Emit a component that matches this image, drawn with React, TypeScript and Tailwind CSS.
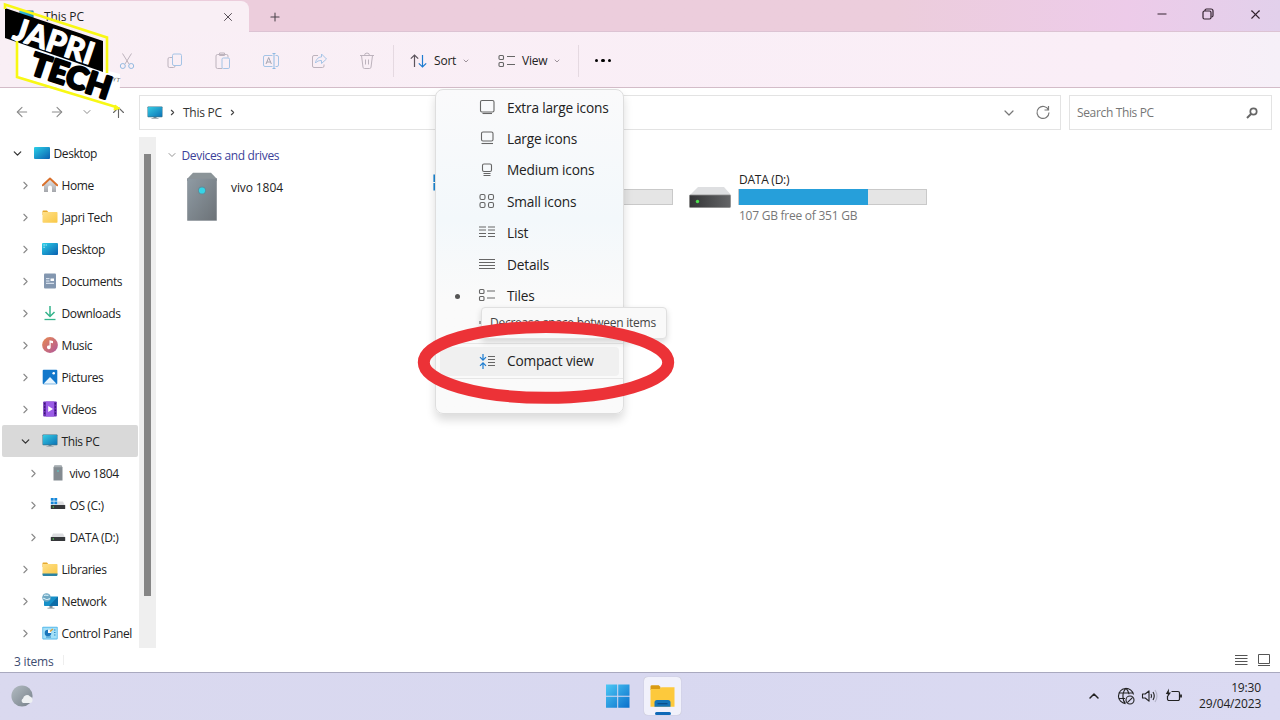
import React from 'react';
import { ChevronDown, ChevronRight, ChevronUp, X, Plus, Minus, ArrowLeft, ArrowRight, ArrowUp } from 'lucide-react';

const Monitor = ({ className = 'h-4 w-4' }: { className?: string }) => (
  <svg viewBox="0 0 16 16" className={className}>
    <defs>
      <linearGradient id="screen" x1="0" y1="0" x2="1" y2="1">
        <stop offset="0" stopColor="#35cbe3" />
        <stop offset="1" stopColor="#0d73b6" />
      </linearGradient>
    </defs>
    <rect x="6.5" y="11" width="3" height="3" fill="#7d8a94" />
    <rect x="4.5" y="13" width="7" height="1" fill="#a9b2b8" />
    <rect x="0.5" y="1.5" width="15" height="10.7" rx="0.7" fill="#37748d" />
    <rect x="1" y="2" width="14" height="9.6" rx="0.4" fill="url(#screen)" />
  </svg>
);

const DesktopIcon = ({ dots = false }: { dots?: boolean }) => (
  <svg viewBox="0 0 16 16" className="h-4 w-4">
    <defs>
      <linearGradient id="desk" x1="0" y1="0" x2="1" y2="1">
        <stop offset="0" stopColor="#2bd0e8" />
        <stop offset="1" stopColor="#0a5fb0" />
      </linearGradient>
    </defs>
    <rect x="0" y="2" width="16" height="12" rx="1" fill="url(#desk)" />
    {dots && <path d="M1.5 4h1.2M3.7 4h1M1.5 6.2h1.2" stroke="#d8f8ff" strokeWidth="1.1" />}
  </svg>
);

const HomeIcon = () => (
  <svg viewBox="0 0 16 16" className="h-4 w-4">
    <defs>
      <linearGradient id="house" x1="0" y1="0" x2="0" y2="1">
        <stop offset="0" stopColor="#e6e6e8" />
        <stop offset="1" stopColor="#a4a6ab" />
      </linearGradient>
    </defs>
    <path d="M2 7.5 8 2l6 5.500V15h-4V10.500a2 2 0 0 0-4 0V15H2z" fill="url(#house)" />
    <path d="M.8 8.300 8 1.500l7.200 6.800" fill="none" stroke="#d9702b" strokeWidth="1.900" strokeLinecap="round" strokeLinejoin="round" />
  </svg>
);

const FolderIcon = ({ base = false }: { base?: boolean }) => (
  <svg viewBox="0 0 16 16" className="h-4 w-4">
    <defs>
      <linearGradient id="folder" x1="0" y1="0" x2="1" y2="1">
        <stop offset="0" stopColor="#ffe08a" />
        <stop offset="1" stopColor="#f9c846" />
      </linearGradient>
    </defs>
    <path d="M.5 2.400a.8.8 0 0 1 .8-.8H5l1.200 1.300V6H.5z" fill="#e6a92c" />
    <rect x=".5" y="3" width="15" height="10.800" rx=".7" fill="url(#folder)" />
    {base && <path d="M.5 12.500h15v1.600a.8.8 0 0 1-.8.8H1.300a.8.8 0 0 1-.8-.8z" fill="#2b83a4" />}
  </svg>
);

const DocumentIcon = () => (
  <svg viewBox="0 0 16 16" className="h-4 w-4">
    <rect x="2" y=".5" width="12" height="15" rx="1" fill="#8397b0" />
    <path d="M8.500 5.500h3.500v2.500H8.500z" fill="#fff" />
    <path d="M4 5.700h3.500M4 8h3.500M4 10.300h8" stroke="#e8f1fa" strokeWidth="1" />
  </svg>
);

const DownloadIcon = () => (
  <svg viewBox="0 0 16 16" className="h-4 w-4">
    <path d="M8 1v10M3.500 7 8 11.500 12.500 7" fill="none" stroke="#35b48c" strokeWidth="1.500" />
    <path d="M2.500 14.500h11" stroke="#35b48c" strokeWidth="1.300" />
  </svg>
);

const MusicIcon = () => (
  <svg viewBox="0 0 16 16" className="h-4 w-4">
    <defs>
      <linearGradient id="music" x1="0" y1="0" x2="1" y2="1">
        <stop offset="0" stopColor="#e8894f" />
        <stop offset="1" stopColor="#b0589d" />
      </linearGradient>
    </defs>
    <circle cx="8" cy="8" r="7.900" fill="url(#music)" />
    <path d="M7.500 3.200 11 4v2.200l-2.300-.5v4.800a1.900 1.900 0 1 1-1.200-1.900z" fill="#fff" />
  </svg>
);

const PictureIcon = () => (
  <svg viewBox="0 0 16 16" className="h-4 w-4">
    <rect x=".7" y=".7" width="14.600" height="14.600" rx="1" fill="#1278cb" />
    <path d="M1.500 14.800 8 8l6.500 6.800z" fill="#e9f6ff" />
    <circle cx="11.700" cy="4.200" r="1.300" fill="#fff" />
  </svg>
);

const VideoIcon = () => (
  <svg viewBox="0 0 16 16" className="h-4 w-4">
    <rect x="1.200" y=".5" width="13.600" height="15" rx=".8" fill="#6b2fb5" />
    <rect x="4" y=".5" width="8" height="15" fill="#9b5ce6" />
    <path d="M2.600 2v12M13.400 2v12" stroke="#3a1470" strokeWidth="1.300" strokeDasharray="1.500 1.700" />
    <path d="M6.200 5v6L11 8z" fill="#fff" />
  </svg>
);

const TowerIcon = () => (
  <svg viewBox="0 0 16 16" className="h-4 w-4">
    <path d="M4.500.5h7l1 2v13h-9v-13z" fill="#838b91" />
    <path d="M4.500.5h7l.8 1.800H3.700z" fill="#a6adb1" />
    <circle cx="8" cy="6" r="1" fill="#62b8bd" />
  </svg>
);

const DriveIcon = ({ windows = false }: { windows?: boolean }) => (
  <svg viewBox="0 0 16 16" className="h-4 w-4">
    <path d="M3 4.500h10l2 4H1z" fill="#dcdde0" />
    <rect x=".8" y="8" width="14.400" height="4" rx=".5" fill="#35373a" />
    <circle cx="3.300" cy="10" r=".8" fill="#4fd052" />
    {windows && (
      <g fill="#1687d9">
        <rect x=".8" y="1" width="6.500" height="6.500" fill="#fff" />
        <path d="M.8 1h2.900v2.800H.8zM4.300 1h2.900v2.800H4.300zM.8 4.400h2.900v2.800H.8zM4.300 4.400h2.900v2.800H4.300z" />
      </g>
    )}
  </svg>
);

const NetworkIcon = () => (
  <svg viewBox="0 0 16 16" className="h-4 w-4">
    <rect x="7.500" y="12" width="3" height="3" fill="#7d8a94" />
    <path d="M5.500 15.200h7" stroke="#9aa4ab" strokeWidth="1" />
    <rect x="2" y="3.500" width="14" height="9.500" rx=".7" fill="#1790c8" />
    <path d="M16 3.500V13H7z" fill="#0f6da8" />
    <circle cx="4.500" cy="4.500" r="4.300" fill="#6fa8c4" />
    <path d="M2 2.500c2-1 3 .5 4.500-.5M1 5.500c2-1 2 1.500 4 1 1-.5 2 0 3-1" stroke="#d5edf5" strokeWidth="1.100" fill="none" />
  </svg>
);

const ControlPanelIcon = () => (
  <svg viewBox="0 0 16 16" className="h-4 w-4">
    <rect x=".3" y="1.800" width="15.400" height="12.600" rx=".8" fill="#56b8ea" />
    <rect x="1.200" y="2.700" width="13.600" height="10.800" fill="#a3e0f8" />
    <circle cx="6" cy="8" r="3.300" fill="#1a76bb" />
    <path d="M6 8V4.500A3.500 3.500 0 0 1 9.400 8z" fill="#fff" />
    <path d="M8 6.500 10.800 4" stroke="#e19b32" strokeWidth="1.300" />
    <path d="M12 5h1.500M12 7.500h1.500M12 10h1.500M4 12h5" stroke="#2d89c4" strokeWidth="1" />
  </svg>
);

const TREE = [
  { label: 'Desktop', level: 0, open: true, icon: <DesktopIcon /> },
  { label: 'Home', level: 1, icon: <HomeIcon /> },
  { label: 'Japri Tech', level: 1, icon: <FolderIcon /> },
  { label: 'Desktop', level: 1, icon: <DesktopIcon dots /> },
  { label: 'Documents', level: 1, icon: <DocumentIcon /> },
  { label: 'Downloads', level: 1, icon: <DownloadIcon /> },
  { label: 'Music', level: 1, icon: <MusicIcon /> },
  { label: 'Pictures', level: 1, icon: <PictureIcon /> },
  { label: 'Videos', level: 1, icon: <VideoIcon /> },
  { label: 'This PC', level: 1, open: true, active: true, icon: <Monitor /> },
  { label: 'vivo 1804', level: 2, icon: <TowerIcon /> },
  { label: 'OS (C:)', level: 2, icon: <DriveIcon windows /> },
  { label: 'DATA (D:)', level: 2, icon: <DriveIcon /> },
  { label: 'Libraries', level: 1, icon: <FolderIcon base /> },
  { label: 'Network', level: 1, icon: <NetworkIcon /> },
  { label: 'Control Panel', level: 1, icon: <ControlPanelIcon /> },
];

const INDENT = ['pl-[8px]', 'pl-[16px]', 'pl-[24px]'];

const TitleBar = () => (
  <div className="flex h-8 items-end border-b border-[#dcc3d3] bg-linear-to-r from-[#eccddc] from-70% via-[#edcbe9] via-88% to-[#e2d0eb]">
    <div className="-mb-px flex h-[31px] w-[249px] items-center rounded-tr-lg bg-[#f9eff5] pl-[19px] pr-[14px]">
      <Monitor className="h-[15px] w-[15px]" />
      <span className="ml-2.5 flex-1 pt-px text-xs tracking-[-0.1px] text-[#222]">This PC</span>
      <X className="h-[14px] w-[14px] text-[#4a434a]" strokeWidth={1.6} />
    </div>
    <div className="flex h-[29px] flex-1 items-center pl-[19px]">
      <Plus className="h-[14px] w-[14px] text-[#4a434a]" strokeWidth={1.8} />
    </div>
    <div className="flex h-[29px] items-center pb-[5px] pr-[17px] text-[#33222f]">
      <Minus className="h-[14px] w-[14px]" strokeWidth={1.7} />
      <svg viewBox="0 0 12 12" className="ml-[33px] h-3 w-3" fill="none" stroke="currentColor" strokeWidth="1.200">
        <rect x="1" y="3" width="8" height="8" rx="1.500" />
        <path d="M3 3V2.500A1.500 1.500 0 0 1 4.500 1H9a2 2 0 0 1 2 2v4.500A1.500 1.500 0 0 1 9.500 9" />
      </svg>
      <X className="ml-[34px] h-[15px] w-[15px]" strokeWidth={1.7} />
    </div>
  </div>
);

const CommandBar = () => (
  <div className="flex h-14 items-center border-b border-[#d3bcc8] bg-linear-to-r from-[#f9eff5] via-[#faeef7] via-88% to-[#f6f0f8] pt-0.5 text-xs tracking-[-0.2px] text-[#222]">
    <div className="flex w-[393px] items-center gap-[30px] pl-[118px]">
      <svg viewBox="0 0 18 18" className="h-[18px] w-[18px] shrink-0" fill="none" strokeWidth="1">
        <path d="M4.500 1.500 11 12M13.500 1.500 7 12" stroke="#bdb3bd" />
        <circle cx="4.800" cy="14" r="2.500" stroke="#92b9e0" />
        <circle cx="13.200" cy="14" r="2.500" stroke="#92b9e0" />
      </svg>
      <svg viewBox="0 0 18 18" className="h-[18px] w-[18px] shrink-0" fill="none" strokeWidth="1">
        <path d="M6 5.500H3.500a1.500 1.500 0 0 0-1.500 1.500v7A1.500 1.500 0 0 0 3.500 15.500h4A1.500 1.500 0 0 0 9 14" stroke="#bdb3bd" />
        <rect x="6.500" y="2" width="9" height="11.500" rx="1.500" stroke="#a5c4e6" />
      </svg>
      <svg viewBox="0 0 18 18" className="h-[18px] w-[18px] shrink-0" fill="none" strokeWidth="1">
        <path d="M8 16.500H3.500A1.500 1.500 0 0 1 2 15V4a1.500 1.500 0 0 1 1.500-1.500h9A1.500 1.500 0 0 1 14 4v1.500M5.500 2.500V1h5v2.500h-5z" stroke="#bdb3bd" />
        <rect x="8" y="6" width="7.500" height="10.500" rx="1.300" stroke="#a5c4e6" />
      </svg>
      <svg viewBox="0 0 18 18" className="h-[18px] w-[18px] shrink-0" fill="none" strokeWidth="1">
        <path d="M10.500 3.500H3A1.500 1.500 0 0 0 1.500 5v8A1.500 1.500 0 0 0 3 14.500h7.500M13.500 3.500H15A1.500 1.500 0 0 1 16.500 5v8a1.500 1.500 0 0 1-1.500 1.500h-1.500" stroke="#a5c4e6" />
        <path d="m4 12 2.700-6.500L9.400 12M5 10h3.500" stroke="#a5a5b2" />
        <path d="M12 2v14M10.500 1.500h3M10.500 16.500h3" stroke="#8fb9e3" />
      </svg>
      <svg viewBox="0 0 18 18" className="h-[18px] w-[18px] shrink-0" fill="none" strokeWidth="1">
        <path d="M8 3.500H4A1.500 1.500 0 0 0 2.500 5v9A1.500 1.500 0 0 0 4 15.500h8.500A1.500 1.500 0 0 0 14 14v-1.500" stroke="#bdb3bd" />
        <path d="M11.500 2v3C8 5 6 7.500 5.500 11c1.500-2 3.500-2.500 6-2.500v3L16.500 7z" stroke="#a5c4e6" strokeLinejoin="round" />
      </svg>
      <svg viewBox="0 0 18 18" className="h-[18px] w-[18px] shrink-0" fill="none" stroke="#bdb3bd" strokeWidth="1">
        <path d="M2 3.500h14M6.500 3.500a2.500 2.500 0 0 1 5 0M3.500 3.500 5 15.200a1.500 1.500 0 0 0 1.500 1.300h5a1.500 1.500 0 0 0 1.500-1.300l1.500-11.700M7.500 7.500v5M10.500 7.500v5" />
      </svg>
    </div>
    <div className="h-8 w-px bg-[#e5d9e1]" />
    <div className="flex w-[184px] items-center pl-4">
      <svg viewBox="0 0 18 16" className="h-4 w-[18px]" fill="none" strokeWidth="1.200">
        <path d="M4.500 14V2M.8 5.700 4.500 2l3.700 3.700" stroke="#5c545c" />
        <path d="M12.500 2v12M8.800 10.300l3.700 3.700 3.700-3.700" stroke="#1d7cd0" />
      </svg>
      <span className="ml-1.5 w-[23px]">Sort</span>
      <ChevronDown className="ml-[5px] h-2 w-2 text-[#8a8088]" strokeWidth={2.5} />
      <svg viewBox="0 0 18 14" className="ml-[28px] h-[14px] w-[18px]" fill="none" stroke="#666" strokeWidth="1.100">
        <rect x="1" y="1.500" width="4.500" height="4" rx="1" />
        <rect x="1" y="8.500" width="4.500" height="4" rx="1" />
        <path d="M9 2.500h8M9 10.500h8" />
      </svg>
      <span className="ml-1.5 w-[26px]">View</span>
      <ChevronDown className="ml-[5px] h-2 w-2 text-[#8a8088]" strokeWidth={2.5} />
    </div>
    <div className="h-8 w-px bg-[#e5d9e1]" />
    <div className="flex gap-[3px] pl-4">
      <i className="h-[3.3px] w-[3.3px] rounded-full bg-black" />
      <i className="h-[3.3px] w-[3.3px] rounded-full bg-black" />
      <i className="h-[3.3px] w-[3.3px] rounded-full bg-black" />
    </div>
  </div>
);

const AddressRow = () => (
  <div className="flex h-[49px] items-start pt-[7px] text-xs tracking-[-0.25px]">
    <div className="flex h-[34px] w-[139px] items-center pl-[14px] text-[#8b8b8b]">
      <ArrowLeft className="h-4 w-4" strokeWidth={1.6} />
      <ArrowRight className="ml-[19px] h-4 w-4" strokeWidth={1.6} />
      <ChevronDown className="ml-[16px] h-3 w-3" strokeWidth={2} />
      <ArrowUp className="ml-[17px] h-[17px] w-[17px] text-[#666]" strokeWidth={1.6} />
    </div>
    <div className="flex h-[35px] w-[922px] items-center border border-[#e3e3e3] pl-[7px] pr-[9px]">
      <Monitor />
      <ChevronRight className="ml-[5px] h-[9px] w-[9px] text-[#444]" strokeWidth={3} />
      <span className="ml-[6px] text-[#333]">This PC</span>
      <ChevronRight className="ml-[6px] h-[9px] w-[9px] text-[#444]" strokeWidth={3} />
      <ChevronDown className="ml-auto h-4 w-4 text-[#777]" strokeWidth={1.8} />
      <svg viewBox="0 0 16 16" className="mb-0.5 ml-[18px] h-4 w-4" fill="none" stroke="#777" strokeWidth="1.200">
        <path d="M13.500 6A6 6 0 1 0 14 8.500M13.500 2v4H9.500" />
      </svg>
    </div>
    <div className="ml-2 flex h-[35px] w-[203px] items-center justify-between border border-[#e3e3e3] pl-[7px] pr-[13px] text-[#767676]">
      <span className="pt-px tracking-[-0.35px]">Search This PC</span>
      <svg viewBox="0 0 12 12" className="h-3 w-3" fill="none" stroke="#666">
        <circle cx="7.500" cy="4.500" r="3.200" strokeWidth="1.700" />
        <path d="M5 7 1 11" strokeWidth="2" />
      </svg>
    </div>
  </div>
);

const Sidebar = () => (
  <div className="flex h-[511px] w-[156px]">
    <div className="w-[139px] overflow-hidden pl-0.5 pr-px text-xs tracking-[-0.4px] text-[#222]">
      {TREE.map((node, i) => (
        <div key={i} className={`flex h-8 items-center ${INDENT[node.level]} ${node.active ? 'rounded-xs bg-[#d9d9d9]' : ''}`}>
          <span className="flex w-[14px] justify-center">
            {node.open ? (
              <ChevronDown className="h-[13px] w-[13px] shrink-0 text-[#333]" strokeWidth={2.3} />
            ) : (
              <ChevronRight className="h-[13px] w-[13px] shrink-0 text-[#8a8a8a]" strokeWidth={2} />
            )}
          </span>
          <span className="ml-2.5 shrink-0">{node.icon}</span>
          <span className="ml-[3.5px] whitespace-nowrap pt-0.5">{node.label}</span>
        </div>
      ))}
    </div>
    <div className="w-[17px] bg-[#efefef] pl-[5px] pt-[17px]">
      <div className="h-[442px] w-[7px] bg-[#868686]" />
    </div>
  </div>
);

const BigDrive = ({ windows = false }: { windows?: boolean }) => (
  <svg viewBox="0 0 44 44" className="h-11 w-11 shrink-0 overflow-visible">
    <defs>
      <linearGradient id="front" x1="0" y1="0" x2="1" y2="0">
        <stop offset="0" stopColor="#333436" />
        <stop offset="1" stopColor="#646567" />
      </linearGradient>
    </defs>
    <path d="M10 15h26l7.500 8.500H1.500z" fill="#dedfe1" />
    <rect x="1.500" y="23" width="41" height="12.500" rx=".8" fill="url(#front)" stroke="#8c8c8c" strokeWidth=".8" />
    <circle cx="9.500" cy="29.500" r="1.700" fill="#4ee04e" />
    {windows && (
      <path d="M-.6 2.500h8V10h-8zM8.400 2.500h8V10h-8zM-.6 11h8v7.500h-8zM8.400 11h8v7.500h-8z" fill="#1a86d3" />
    )}
  </svg>
);

const drives = [
  { id: 'c', name: '', free: '', used: 60, windows: true },
  { id: 'd', name: 'DATA (D:)', free: '107 GB free of 351 GB', used: 69, windows: false },
];

const Content = () => (
  <div className="flex-1 pl-[10px] pt-2.5 text-xs tracking-[-0.25px]">
    <div className="flex h-4 items-center tracking-[-0.35px] text-[#3b4199]">
      <ChevronDown className="mr-[3.5px] h-3 w-3 text-[#888]" strokeWidth={1.8} />
      <span className="pt-0.5">Devices and drives</span>
    </div>
    <div className="flex pl-[21px] pt-[9px]">
      <div className="flex w-[247px]">
        <svg viewBox="0 0 30 49" className="h-[49px] w-[30px]">
          <defs>
            <linearGradient id="tower" x1="0" y1="0" x2="1" y2="1">
              <stop offset="0" stopColor="#8f9ba4" />
              <stop offset="1" stopColor="#6c7277" />
            </linearGradient>
          </defs>
          <path d="M6 .7h18L30 7v2H0V7z" fill="#8b9498" />
          <rect x=".3" y="6.500" width="29.400" height="42" rx=".6" fill="url(#tower)" stroke="#8c9298" strokeWidth=".6" />
          <circle cx="15" cy="18.500" r="4" fill="#5d8c9b" />
          <circle cx="15" cy="18.500" r="3.100" fill="#36d4e6" />
        </svg>
        <span className="ml-[14px] pt-2 tracking-[-0.1px] text-[#222]">vivo 1804</span>
      </div>
      {drives.map((drive) => (
        <div key={drive.id} className="flex w-[254px]">
          <BigDrive windows={drive.windows} />
          <div className="ml-[6px] w-[189px] leading-4">
            <p className="h-4 pl-px text-[#222]">{drive.name}</p>
            <div className="mt-px h-4 border border-[#c9c9c9] bg-[#e5e5e5]">
              <div className="-mt-px h-4 bg-[#269fda]" style={{ width: `${drive.used}%` }} />
            </div>
            <p className="mt-[3px] whitespace-nowrap pl-px text-[#777]">{drive.free}</p>
          </div>
        </div>
      ))}
    </div>
  </div>
);

const Glyph = ({ children }: { children: React.ReactNode }) => (
  <svg viewBox="0 0 18 18" className="h-[18px] w-[18px] shrink-0" fill="none" stroke="#666" strokeWidth="1.100">
    {children}
  </svg>
);

// The tooltip covers the last entry, only its glyph peeks out
const VIEWS = [
  { label: 'Extra large icons', glyph: <><rect x="2.500" y="1.500" width="13.500" height="11.500" rx="1.500" /><path d="M4.500 14.500h9.500" /></> },
  { label: 'Large icons', glyph: <><rect x="3.500" y="2" width="11.500" height="9" rx="1.500" /><path d="M3.500 13.500h11.500" /></> },
  { label: 'Medium icons', glyph: <><rect x="4.500" y="2" width="9" height="7.500" rx="1.500" /><path d="M5.500 11.500h7M5.500 13.500h7" /></> },
  { label: 'Small icons', glyph: <><rect x="2" y="1.500" width="5" height="5" rx="1.500" /><rect x="10.500" y="1.500" width="5" height="5" rx="1.500" /><rect x="2" y="9.500" width="5" height="5" rx="1.500" /><rect x="10.500" y="9.500" width="5" height="5" rx="1.500" /></> },
  { label: 'List', glyph: <path d="M1 3h7M1 6h7M1 9.500h7M1 12.500h7M10 3h7M10 6h7M10 9.500h7M10 12.500h7" /> },
  { label: 'Details', glyph: <path d="M1 3.500h16M1 6.500h16M1 9.500h16M1 12.500h16" /> },
  { label: 'Tiles', selected: true, glyph: <><rect x="1.500" y="2.500" width="4.500" height="4" rx="1" /><rect x="1.500" y="9.500" width="4.500" height="4" rx="1" /><path d="M9 4h8M9 11h8" /></> },
  { label: '', glyph: <path d="M2 3v3M2 9v3M5 4h12M5 11h12" /> },
];

const ViewMenu = () => (
  <div className="absolute left-[435px] top-[89px] h-[325px] w-[189px] rounded-lg border border-[#dedede] bg-linear-to-b from-[#fafafb] via-[#f3f8fb] via-40% to-[#fafafa] to-65% pt-[2.4px] text-[13.7px] tracking-[-0.2px] text-[#222] shadow-[0_6px_10px_rgba(0,0,0,0.14)]">
    {VIEWS.map((view) => (
      <div key={view.label} className="flex h-[31.35px] items-center pl-[19px]">
        <span className={`h-[5px] w-[5px] rounded-full ${view.selected ? 'bg-[#555]' : ''}`} />
        <span className="ml-[18px]"><Glyph>{view.glyph}</Glyph></span>
        <span className="ml-[11px] whitespace-nowrap">{view.label}</span>
      </div>
    ))}
    <div className="h-px bg-[#e6e6e6]" />
    <div className="mx-1 mt-[3px] flex h-[29px] items-center rounded bg-[#f0f0f0] pl-[38px]">
      <Glyph>
        <path d="M5 1v6M2 4.200 5 7.200l3-3M5 16v-6M2 12.800l3-3 3 3" stroke="#1d7cd0" strokeWidth="1.200" />
        <path d="M10 3.500h7M10 6.500h7M10 9.500h7M10 12.500h7" />
      </Glyph>
      <span className="ml-[11px]">Compact view</span>
    </div>
    <div className="mt-[2px] h-px bg-[#e6e6e6]" />
  </div>
);

const Logo = () => (
  <svg viewBox="0 0 124 114" className="absolute left-0 top-0 h-[114px] w-[124px]">
    <path d="M17 38 105 70l15 4v13l-6 18L17 76z" fill="#fff" />
    <path d="M5 8 103 41v31L5 38z" fill="#000" />
    <path d="M5 9V4.500L107 37.500V73M17 40v37l99 30" fill="none" stroke="#f8f814" strokeWidth="2.600" />
    <path d="m115 105 5 3.500-6 1.500z" fill="#f8f814" stroke="#f8f814" />
    <g transform="rotate(18.5)" fontFamily="Lato, 'Liberation Sans', sans-serif" fontWeight="900" strokeLinejoin="round">
      <text x="23" y="33" fontSize="31" textLength="83" lengthAdjust="spacingAndGlyphs" fill="#fff" stroke="#fff" strokeWidth="1">JAPRI</text>
      <text x="50" y="60.500" fontSize="31" textLength="83" lengthAdjust="spacingAndGlyphs" fill="#000" stroke="#000" strokeWidth="2.400">TECH</text>
    </g>
    <text x="112" y="81" fontSize="6" fill="#555" transform="rotate(12 112 81)" fontFamily="Liberation Sans, sans-serif">YT</text>
  </svg>
);

const Taskbar = () => (
  <div className="flex h-12 items-center border-t border-[#a9a9bf] bg-linear-to-r from-[#dad9ef] via-[#d8d8f0] to-[#dbdaf2] pb-px text-[#222]">
    <div className="w-[606px] pl-[11px]">
      <svg viewBox="0 0 22 22" className="h-[22px] w-[22px]">
        <defs>
          <linearGradient id="moon" x1="0" y1="0" x2="1" y2="1">
            <stop offset="0" stopColor="#b3bcc2" />
            <stop offset="1" stopColor="#76808a" />
          </linearGradient>
        </defs>
        <circle cx="11" cy="11" r="10.600" fill="url(#moon)" />
        <path d="M12 18a2.500 2.500 0 0 1 0-4.500 4 4 0 0 1 7-2q2.500.5 2.500 3.500t-2.500 3z" fill="#eef1f3" />
      </svg>
    </div>
    <svg viewBox="0 0 24 24" className="h-6 w-6">
      <defs>
        <linearGradient id="win" x1="0" y1="0" x2="1" y2="1">
          <stop offset="0" stopColor="#4cc8f5" />
          <stop offset="1" stopColor="#0a6fcb" />
        </linearGradient>
      </defs>
      <path d="M0 .5h11.200v11.200H0zM12.200.5h11.300v11.200H12.200zM0 12.700h11.200v11H0zM12.200 12.700h11.300v11H12.200z" fill="url(#win)" />
    </svg>
    <div className="ml-[14px] flex h-[38px] w-[37px] flex-col items-center rounded bg-[#f1f1fb] pt-[8px] shadow-[0_0_1px_#aaa]">
      <svg viewBox="0 0 25 23" className="h-[23px] w-[25px]">
        <path d="M.5 1.500A1.300 1.300 0 0 1 1.800.2h7l1.700 1.900V5H.5z" fill="#d99b12" />
        <path d="M.5 4h9l2-1.800h13v19.600H.5z" fill="#fdc93c" />
        <path d="M4.500 21.800V17.500a2.500 2.500 0 0 1 2.500-2.500h11a2.500 2.500 0 0 1 2.500 2.500v4.300z" fill="#1474b8" />
        <path d="M7.500 18.700h10" stroke="#0a4b86" strokeWidth="1.200" />
      </svg>
      <div className="mt-1 h-[3px] w-4 rounded-full bg-[#0f69b8]" />
    </div>
    <div className="ml-auto flex items-center pr-[19px]">
      <ChevronUp className="h-4 w-4" strokeWidth={2.2} />
      <svg viewBox="0 0 18 18" className="ml-[15px] h-[18px] w-[18px]" fill="none" stroke="#222" strokeWidth="1.100">
        <path d="M16.500 7.500A7.600 7.600 0 1 0 8.500 16.600M1.500 6h14.500M1.500 11.500H8M8.500 16.600C5 13 5 5 9 1.300c1.800 1.800 2.800 3.800 3 6" />
        <circle cx="13" cy="13" r="4" />
        <path d="m10.300 15.700 5.400-5.400" />
      </svg>
      <svg viewBox="0 0 18 16" className="ml-1.5 h-4 w-[18px]" fill="none" stroke="#222" strokeWidth="1.100">
        <path d="M1.500 6h2.700L8 2.800v10.400L4.200 10H1.500z" strokeLinejoin="round" />
        <path d="M10 6q1.200 2 0 4M12 4q2.500 4 0 8" />
        <path d="M14 2q4 6 0 12" stroke="#b2b2c6" />
      </svg>
      <svg viewBox="0 0 18 16" className="ml-[6px] h-4 w-[18px]" fill="none" stroke="#222" strokeWidth="1.200">
        <path d="M6.500 3.500H13A1.500 1.500 0 0 1 14.500 5v6a1.500 1.500 0 0 1-1.500 1.500H4A1.500 1.500 0 0 1 2.500 11V8" />
        <path d="M16 6.500v3" strokeWidth="1.800" />
        <path d="M4 .5.800 6h2L2 10l4-5.500H3.800z" fill="#222" stroke="none" />
      </svg>
      <div className="ml-4 w-[62px] text-right text-xs leading-4 tracking-[-0.15px]">
        <p>19:30</p>
        <p>29/04/2023</p>
      </div>
    </div>
  </div>
);

export default function App() {
  return (
    <div className="relative flex h-[720px] w-[1280px] flex-col overflow-hidden bg-white font-['Open_Sans','Noto_Sans',sans-serif]">
      <TitleBar />
      <CommandBar />
      <AddressRow />
      <div className="flex h-[511px]">
        <Sidebar />
        <Content />
      </div>
      <div className="flex h-6 items-center pl-[14px] pr-2 text-xs tracking-[-0.2px] text-[#3d4c70]">
        <span className="pt-[3px]">3 items</span>
        <span className="ml-2.5 h-2.5 w-px bg-[#eee]" />
        <svg viewBox="0 0 40 14" className="ml-auto h-[14px] w-10" fill="none" stroke="#555" strokeWidth="1">
          <path d="M3 2.500h12.500M3 5.500h12.500M3 8.500h12.500M3 11.500h12.500" />
          <path d="M26.500 1.500h11v9h-11zM26 12.500h12" />
        </svg>
      </div>
      <Taskbar />

      <ViewMenu />
      <div className="absolute left-[481px] top-[307px] flex h-[32px] w-[186px] items-center rounded border border-[#e0e0e0] bg-[#f9f9f9] pb-px pl-2 text-xs tracking-[-0.25px] text-[#444] shadow-[0_3px_6px_rgba(0,0,0,0.15)]">
        Decrease space between items
      </div>
      <svg viewBox="0 0 260 86" className="absolute left-[416px] top-[319px] h-[86px] w-[260px]">
        <ellipse cx="130" cy="43.400" rx="122.200" ry="35.400" fill="none" stroke="#ec3237" strokeWidth="12" />
      </svg>
      <Logo />
    </div>
  );
}
